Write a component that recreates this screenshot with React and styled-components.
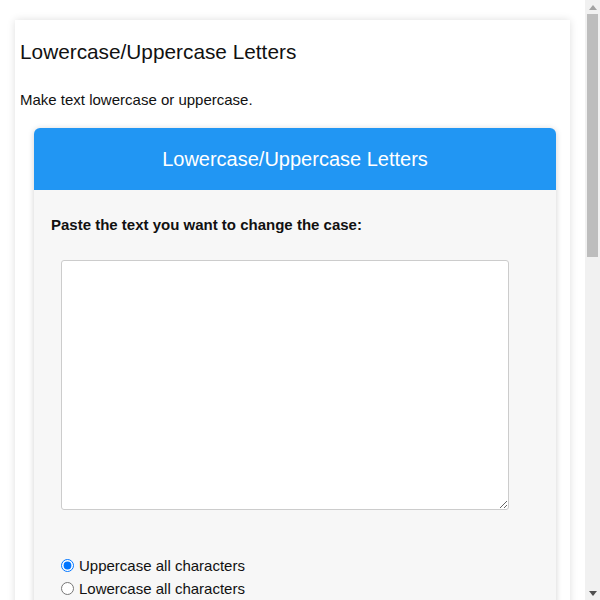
import React, { useState } from "react";
import styled, { createGlobalStyle } from "styled-components";

const Global = createGlobalStyle`
  html, body { margin: 0; padding: 0; background: #fff; }
  body { font-family: "Liberation Sans", Arial, sans-serif; color: #111; }
`;

const Page = styled.div`
  box-sizing: border-box;
  min-height: 1407px;
  padding: 20px 30px 40px 15px;
`;

const ScrollBar = styled.div`
  position: fixed;
  top: 0;
  right: 0;
  width: 15px;
  height: 100vh;
  background: #f1f1f1;
  display: flex;
  flex-direction: column;
  align-items: center;
`;

const Arrow = styled.div`
  width: 15px;
  height: 14px;
  display: flex;
  align-items: center;
  justify-content: center;
  flex: none;
`;

const Track = styled.div`
  flex: 1;
  width: 15px;
  display: flex;
  justify-content: center;
`;

const Thumb = styled.div`
  width: 11px;
  height: 243px;
  background: #bdbdbd;
`;

const Card = styled.div`
  background: #fff;
  box-shadow: 0 0 8px rgba(0, 0, 0, 0.13);
  padding: 20px 0 40px 5px;
`;

const Title = styled.h1`
  margin: 0;
  font-size: 20.8px;
  line-height: 23px;
  font-weight: 400;
`;

const Lead = styled.p`
  margin: 28px 0 0 0;
  font-size: 15px;
  line-height: 17px;
`;

const Tool = styled.div`
  margin: 20px 14px 0 14px;
  border-radius: 6px;
  overflow: hidden;
  background: #f7f7f7;
  box-shadow: 0 1px 6px rgba(0, 0, 0, 0.18);
`;

const ToolHeader = styled.div`
  background: #2196f3;
  height: 62px;
  display: flex;
  align-items: center;
  justify-content: center;
  color: #fff;
  font-size: 20px;
`;

const ToolBody = styled.div`
  padding: 26px 47px 60px 17px;
  display: flex;
  flex-direction: column;
`;

const Label = styled.label`
  font-weight: 700;
  font-size: 15px;
  line-height: 17px;
`;

const Area = styled.textarea`
  box-sizing: border-box;
  margin: 27px 0 0 10px;
  width: 448px;
  height: ${(p) => p.$h}px;
  border: 1px solid #ccc;
  border-radius: 3px;
  background: #fff;
  font-family: "Liberation Sans", Arial, sans-serif;
  font-size: 15px;
  padding: 6px;
`;

const Options = styled.div`
  margin: 47px 0 0 10px;
  display: flex;
  flex-direction: column;
  gap: 6px;
`;

const Option = styled.label`
  display: flex;
  align-items: center;
  font-size: 15px;
  line-height: 17px;
`;

const Radio = styled.input`
  margin: 0 5px 0 0;
  width: 13px;
  height: 13px;
`;

const Button = styled.button`
  margin: 30px 0 0 10px;
  align-self: flex-start;
  background: #2196f3;
  color: #fff;
  border: none;
  border-radius: 4px;
  padding: 10px 22px;
  font-size: 15px;
  font-family: "Liberation Sans", Arial, sans-serif;
`;

const Note = styled.p`
  margin: 30px 0 0 0;
  font-size: 15px;
  line-height: 22px;
`;

export default function App() {
  const [mode, setMode] = useState("upper");
  return (
    <>
      <Global />
      <Page>
        <Card>
          <Title>Lowercase/Uppercase Letters</Title>
          <Lead>Make text lowercase or uppercase.</Lead>
          <Tool>
            <ToolHeader>Lowercase/Uppercase Letters</ToolHeader>
            <ToolBody>
              <Label>Paste the text you want to change the case:</Label>
              <Area $h={250} />
              <Options>
                <Option>
                  <Radio type="radio" name="mode" checked={mode === "upper"} onChange={() => setMode("upper")} />
                  Uppercase all characters
                </Option>
                <Option>
                  <Radio type="radio" name="mode" checked={mode === "lower"} onChange={() => setMode("lower")} />
                  Lowercase all characters
                </Option>
              </Options>
              <Button>Convert</Button>
              <Area $h={250} readOnly />
            </ToolBody>
          </Tool>
          <Note>
            Use this tool to convert any text to lowercase or uppercase letters.
          </Note>
        </Card>
      </Page>
      <ScrollBar>
        <Arrow>
          <svg width="8" height="5" viewBox="0 0 8 5"><path d="M4 0L8 5H0Z" fill="#a3a3a3" /></svg>
        </Arrow>
        <Track>
          <Thumb />
        </Track>
        <Arrow>
          <svg width="8" height="5" viewBox="0 0 8 5"><path d="M0 0H8L4 5Z" fill="#505050" /></svg>
        </Arrow>
      </ScrollBar>
    </>
  );
}
